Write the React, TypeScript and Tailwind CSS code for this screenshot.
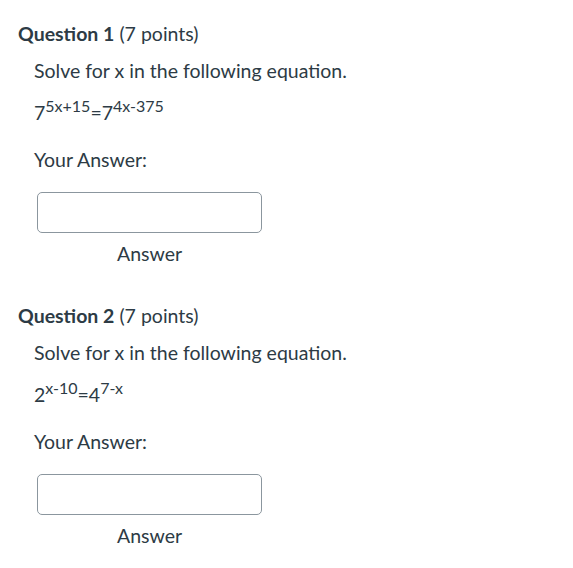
export default function App() {
  const questions = [
    {
      n: 1,
      eq: (
        <>
          7<sup className="text-[16px] leading-none">5x+15</sup>=7<sup className="text-[16px] leading-none">4x-375</sup>
        </>
      ),
    },
    {
      n: 2,
      eq: (
        <>
          2<sup className="text-[16px] leading-none">x-10</sup>=4<sup className="text-[16px] leading-none">7-x</sup>
        </>
      ),
    },
  ];

  return (
    <div className="min-h-screen bg-white text-[#2d3b45] font-['Lato',sans-serif]">
      {questions.map((q) => (
        <div key={q.n} className="h-[282px] pt-[22px] pl-[18px]">
          <h2 className="text-[19.5px] leading-6">
            <span className="font-bold">Question {q.n}</span> (7 points)
          </h2>
          <div className="pl-4">
            <p className="mt-[13px] text-[19.5px] leading-6">Solve for x in the following equation.</p>
            <p className="mt-[18px] text-[19.5px] leading-6">{q.eq}</p>
            <p className="mt-[23px] text-[19.5px] leading-6">Your Answer:</p>
            <div className="mt-[20px] ml-[3px] flex w-[225px] flex-col items-center">
              <input
                type="text"
                aria-label="Answer"
                className="h-[41px] w-full rounded-[5px] border border-[#8b969e] bg-white px-2 outline-none"
              />
              <span className="mt-[9px] text-[19.5px] leading-6">Answer</span>
            </div>
          </div>
        </div>
      ))}
    </div>
  );
}
